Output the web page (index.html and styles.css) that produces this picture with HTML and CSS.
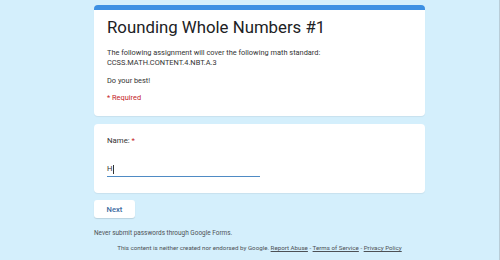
FILE: index.html
```html
<!DOCTYPE html>
<html>
<head>
<meta charset="utf-8">
<link rel="stylesheet" href="styles.css">
</head>
<body>
<div class="page">
  <div class="card header-card">
    <h1 class="title">Rounding Whole Numbers #1</h1>
    <p class="desc">The following assignment will cover the following math standard:<br>CCSS.MATH.CONTENT.4.NBT.A.3</p>
    <p class="desc best">Do your best!</p>
    <p class="required">* Required</p>
  </div>
  <div class="card question-card">
    <div class="label">Name: <span class="star">*</span></div>
    <div class="input">H<span class="caret"></span></div>
  </div>
  <button class="next">Next</button>
  <p class="never">Never submit passwords through Google Forms.</p>
  <p class="footer">This content is neither created nor endorsed by Google. <a>Report Abuse</a> - <a>Terms of Service</a> - <a>Privacy Policy</a></p>
</div>
</body>
</html>
```
FILE: styles.css
```css
html, body {
  margin: 0;
  padding: 0;
  height: 100%;
}
body {
  background: #d4effc;
  font-family: Roboto, "Liberation Sans", sans-serif;
  color: #202124;
  border-right: 1px solid #b9cdd8;
  box-sizing: border-box;
}
.page {
  width: 331px;
  margin-left: 94px;
  padding-top: 5px;
}
.card {
  background: #fff;
  border-radius: 4px;
  box-shadow: 0 1px 1px rgba(0,0,0,0.06);
  padding: 0 13px;
}
.header-card {
  border-top: 5px solid #3d90e3;
  padding-bottom: 13px;
}
.title {
  margin: 6px 0 0;
  font-size: 16.8px;
  line-height: 22px;
  font-weight: 400;
  color: #202124;
}
.desc {
  margin: 10px 0 0;
  font-size: 7.4px;
  line-height: 10px;
  color: #333;
}
.best {
  margin-top: 8px;
}
.required {
  margin: 7px 0 0;
  font-size: 7.4px;
  line-height: 10px;
  color: #c5221f;
}
.question-card {
  margin-top: 8px;
  padding-top: 12px;
  padding-bottom: 16px;
}
.label {
  font-size: 7.8px;
  line-height: 10px;
  color: #333;
}
.star {
  color: #c5221f;
}
.input {
  margin-top: 16px;
  width: 153px;
  height: 14px;
  line-height: 14px;
  font-size: 7.6px;
  color: #333;
  border-bottom: 1.5px solid #4f8bc4;
  display: flex;
  align-items: center;
}
.caret {
  display: inline-block;
  width: 0;
  height: 9px;
  border-left: 1px solid #333;
  margin-left: 1px;
}
.next {
  margin-top: 7px;
  width: 41px;
  height: 18px;
  border: 0;
  border-radius: 3px;
  background: #fff;
  box-shadow: 0 1px 1px rgba(0,0,0,0.12);
  font-family: Roboto, "Liberation Sans", sans-serif;
  font-size: 7.6px;
  font-weight: 500;
  color: #3b6aa0;
  padding: 0;
  display: block;
}
.never {
  margin: 11px 0 0;
  font-size: 6.45px;
  line-height: 9px;
  color: #4d5156;
}
.footer {
  margin: 6px 0 0;
  font-size: 6.2px;
  line-height: 9px;
  color: #4d5156;
  text-align: center;
}
.footer a {
  text-decoration: underline;
  color: #4d5156;
}
```
